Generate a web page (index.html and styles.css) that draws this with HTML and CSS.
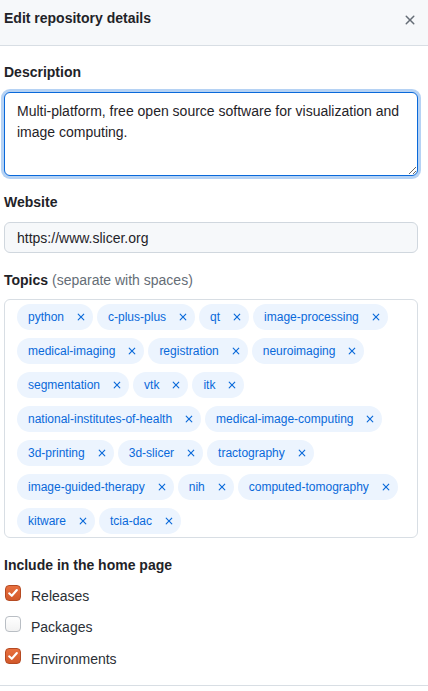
FILE: index.html
```html
<!DOCTYPE html>
<html lang="en">
<head>
<meta charset="utf-8">
<title>Edit repository details</title>
<link rel="stylesheet" href="styles.css">
</head>
<body>
<div class="dialog">
  <header class="dialog-header">
    <h1 class="dialog-title">Edit repository details</h1>
    <button class="close-btn" type="button" aria-label="Close">
      <svg viewBox="0 0 16 16" width="16" height="16" aria-hidden="true"><path d="M3.72 3.72a.75.75 0 0 1 1.06 0L8 6.94l3.22-3.22a.749.749 0 0 1 1.275.326.749.749 0 0 1-.215.734L9.06 8l3.22 3.22a.749.749 0 0 1-.326 1.275.749.749 0 0 1-.734-.215L8 9.06l-3.22 3.22a.751.751 0 0 1-1.042-.018.751.751 0 0 1-.018-1.042L6.94 8 3.72 4.78a.75.75 0 0 1 0-1.06Z"/></svg>
    </button>
  </header>
  <div class="dialog-body">
    <label class="field-label label-desc" for="desc">Description</label>
    <textarea id="desc" class="textarea focused" autofocus>Multi-platform, free open source software for visualization and image computing.</textarea>

    <label class="field-label label-web" for="web">Website</label>
    <input id="web" class="input" type="text" value="https://www.slicer.org">

    <div class="field-label label-topics">Topics <span class="hint">(separate with spaces)</span></div>
    <div class="topics">
      <span class="tag">python<svg class="tag-x" viewBox="0 0 16 16"><use href="#x"/></svg></span>
      <span class="tag">c-plus-plus<svg class="tag-x" viewBox="0 0 16 16"><use href="#x"/></svg></span>
      <span class="tag">qt<svg class="tag-x" viewBox="0 0 16 16"><use href="#x"/></svg></span>
      <span class="tag">image-processing<svg class="tag-x" viewBox="0 0 16 16"><use href="#x"/></svg></span>
      <span class="tag">medical-imaging<svg class="tag-x" viewBox="0 0 16 16"><use href="#x"/></svg></span>
      <span class="tag">registration<svg class="tag-x" viewBox="0 0 16 16"><use href="#x"/></svg></span>
      <span class="tag">neuroimaging<svg class="tag-x" viewBox="0 0 16 16"><use href="#x"/></svg></span>
      <span class="tag">segmentation<svg class="tag-x" viewBox="0 0 16 16"><use href="#x"/></svg></span>
      <span class="tag">vtk<svg class="tag-x" viewBox="0 0 16 16"><use href="#x"/></svg></span>
      <span class="tag">itk<svg class="tag-x" viewBox="0 0 16 16"><use href="#x"/></svg></span>
      <span class="tag">national-institutes-of-health<svg class="tag-x" viewBox="0 0 16 16"><use href="#x"/></svg></span>
      <span class="tag">medical-image-computing<svg class="tag-x" viewBox="0 0 16 16"><use href="#x"/></svg></span>
      <span class="tag">3d-printing<svg class="tag-x" viewBox="0 0 16 16"><use href="#x"/></svg></span>
      <span class="tag">3d-slicer<svg class="tag-x" viewBox="0 0 16 16"><use href="#x"/></svg></span>
      <span class="tag">tractography<svg class="tag-x" viewBox="0 0 16 16"><use href="#x"/></svg></span>
      <span class="tag">image-guided-therapy<svg class="tag-x" viewBox="0 0 16 16"><use href="#x"/></svg></span>
      <span class="tag">nih<svg class="tag-x" viewBox="0 0 16 16"><use href="#x"/></svg></span>
      <span class="tag">computed-tomography<svg class="tag-x" viewBox="0 0 16 16"><use href="#x"/></svg></span>
      <span class="tag">kitware<svg class="tag-x" viewBox="0 0 16 16"><use href="#x"/></svg></span>
      <span class="tag">tcia-dac<svg class="tag-x" viewBox="0 0 16 16"><use href="#x"/></svg></span>
    </div>

    <div class="field-label label-include">Include in the home page</div>
    <label class="check-row"><span class="check checked"><svg viewBox="0 0 16 16"><path d="M3.6 8.4 6.6 11.2 12.4 4.6" /></svg></span>Releases</label>
    <label class="check-row"><span class="check"></span>Packages</label>
    <label class="check-row"><span class="check checked"><svg viewBox="0 0 16 16"><path d="M3.6 8.4 6.6 11.2 12.4 4.6" /></svg></span>Environments</label>
  </div>
  <div class="dialog-footer-line"></div>
</div>
<svg class="defs" width="0" height="0" aria-hidden="true">
  <defs>
    <path id="x" d="M3.72 3.72a.75.75 0 0 1 1.06 0L8 6.94l3.22-3.22a.749.749 0 0 1 1.275.326.749.749 0 0 1-.215.734L9.06 8l3.22 3.22a.749.749 0 0 1-.326 1.275.749.749 0 0 1-.734-.215L8 9.06l-3.22 3.22a.751.751 0 0 1-1.042-.018.751.751 0 0 1-.018-1.042L6.94 8 3.72 4.78a.75.75 0 0 1 0-1.06Z"/>
  </defs>
</svg>
</body>
</html>
```

FILE: styles.css
```css
* { box-sizing: border-box; }

html, body {
  margin: 0;
  padding: 0;
  background: #ffffff;
}

body {
  font-family: "Liberation Sans", Arial, sans-serif;
  font-size: 14px;
  line-height: 20px;
  color: #1f2328;
}

.dialog {
  width: 428px;
}

.dialog-header {
  display: flex;
  justify-content: space-between;
  align-items: flex-start;
  height: 46px;
  padding: 8px 10px 0 4px;
  background: #f6f8fa;
  border-bottom: 1px solid #d8dee4;
}

.dialog-title {
  margin: 0;
  font-size: 14px;
  line-height: 20px;
  font-weight: 700;
}

.close-btn {
  margin: 4px 0 0 0;
  padding: 0;
  border: 0;
  background: transparent;
  width: 16px;
  height: 16px;
  display: flex;
  fill: #656d76;
}

.close-btn svg { display: block; }

.dialog-body {
  display: flex;
  flex-direction: column;
  padding: 0 10px 0 4px;
}

.field-label {
  display: block;
  font-weight: 700;
  line-height: 20px;
}

.label-desc { margin-top: 16px; margin-bottom: 10px; }
.label-web { margin-top: 16px; margin-bottom: 10px; }
.label-topics { margin-top: 17px; margin-bottom: 9px; }
.label-include { margin-top: 17px; margin-bottom: 11px; }

.hint {
  font-weight: 400;
  color: #656d76;
}

.textarea {
  display: block;
  width: 414px;
  height: 84px;
  padding: 8px 12px 6px;
  font-family: "Liberation Sans", Arial, sans-serif;
  font-size: 14px;
  line-height: 21px;
  color: #1f2328;
  background: #ffffff;
  border: 1px solid #d0d7de;
  border-radius: 6px;
  resize: vertical;
  outline: none;
  overflow: hidden;
}

.textarea.focused {
  border-color: #0969da;
  box-shadow: 0 0 0 3px rgba(9, 105, 218, 0.3);
}

.input {
  display: block;
  width: 414px;
  height: 31px;
  padding: 0 12px;
  font-family: "Liberation Sans", Arial, sans-serif;
  font-size: 14px;
  color: #1f2328;
  background: #f6f8fa;
  border: 1px solid #d0d7de;
  border-radius: 6px;
  outline: none;
}

.topics {
  display: flex;
  flex-wrap: wrap;
  gap: 8px 4px;
  width: 414px;
  padding: 4px 12px 3px 12px;
  border: 1px solid #d8dee4;
  border-radius: 6px;
  background: #ffffff;
}

.tag {
  display: inline-flex;
  align-items: center;
  height: 26px;
  padding: 0 6px 0 11px;
  font-size: 12px;
  line-height: 26px;
  color: #0969da;
  background: #ecf4fe;
  border-radius: 13px;
  white-space: nowrap;
}

.tag-x {
  width: 12px;
  height: 12px;
  margin-left: 11px;
  fill: #0969da;
}

.check-row {
  display: flex;
  align-items: flex-start;
  line-height: 20px;
  height: 20px;
  margin-bottom: 11.3px;
  color: #2b3036;
}

.check-row:last-child { margin-bottom: 0; }

.check {
  flex: none;
  width: 16px;
  height: 16px;
  margin: -1px 10px 0 1px;
  border: 1px solid #b9bec4;
  border-radius: 4px;
  background: linear-gradient(#ffffff, #f2f2f2);
  display: flex;
  align-items: center;
  justify-content: center;
}

.check.checked {
  border-color: #b54a22;
  background: linear-gradient(#e8703f, #d2582a);
}

.check svg {
  width: 14px;
  height: 14px;
  fill: none;
  stroke: #ffffff;
  stroke-width: 2.4;
  stroke-linecap: round;
  stroke-linejoin: round;
}

.dialog-footer-line {
  margin-top: 16.5px;
  border-top: 1px solid #d8dee4;
}

.defs {
  position: absolute;
  width: 0;
  height: 0;
  overflow: hidden;
}
```
